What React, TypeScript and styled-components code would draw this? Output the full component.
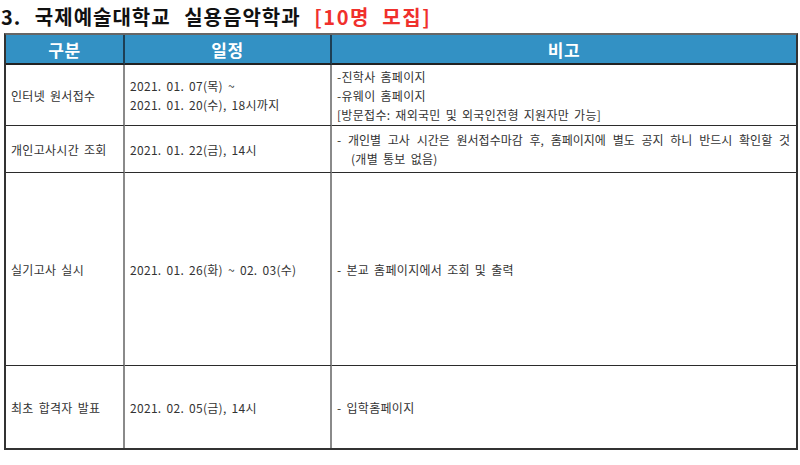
import React, { FC } from "react";
import styled, { createGlobalStyle } from "styled-components";

const GlobalStyle = createGlobalStyle`
  html, body {
    margin: 0;
    padding: 0;
    background: #ffffff;
  }
  body {
    font-family: "Noto Sans CJK KR", "Noto Sans", sans-serif;
  }
`;

const Page = styled.div`
  width: 800px;
  height: 465px;
  overflow: hidden;
  background: #fff;
`;

const Title = styled.h2`
  margin: 0;
  padding: 3px 0 0 1px;
  height: 33px;
  box-sizing: border-box;
  font-size: 20px;
  font-weight: 700;
  color: #111;
  letter-spacing: 1px;
  word-spacing: 8px;
  line-height: 27px;
  white-space: nowrap;
`;

const Accent = styled.span`
  color: #f0302c;
  letter-spacing: 1.6px;
  word-spacing: 6px;
`;

const Table = styled.div`
  margin-left: 4px;
  width: 794px;
  box-sizing: border-box;
  display: grid;
  grid-template-columns: 119px 207px 1fr;
  grid-template-rows: 30px 61px 47px 193px 82px;
  border: 2px solid #333;
  border-top-color: #666;
`;

const HeadCell = styled.div<{ $last?: boolean }>`
  background: #3391c4;
  color: #fff;
  font-size: 17px;
  font-weight: 700;
  display: flex;
  align-items: center;
  justify-content: center;
  border-right: ${p => (p.$last ? "none" : "2px solid #1d3f55")};
  border-bottom: 2px solid #222;
  letter-spacing: 0.5px;
`;

const Cell = styled.div<{ $last?: boolean; $bottom?: boolean; $pad?: number }>`
  display: flex;
  flex-direction: column;
  justify-content: ${p => (p.$pad !== undefined ? "flex-start" : "center")};
  padding: ${p => (p.$pad !== undefined ? `${p.$pad}px 4px 0 5px` : "0 4px 0 5px")};
  font-size: 12px;
  line-height: 19px;
  letter-spacing: 0.3px;
  color: #333;
  border-right: ${p => (p.$last ? "none" : "2px solid #8a8a8a")};
  border-bottom: ${p => (p.$bottom ? "none" : "1.5px solid #2b2b2b")};
  box-sizing: border-box;
  white-space: nowrap;
  word-spacing: 2px;
`;

const Justified = styled.div`
  white-space: normal;
  text-align: justify;
  text-align-last: justify;
  letter-spacing: 0;
  padding-right: 2px;
`;

const Indent = styled.div`
  padding-left: 14px;
`;

type Row = {
  label: string;
  date: React.ReactNode;
  note: React.ReactNode;
  pad?: number;
};

const rows: Row[] = [
  {
    label: "인터넷 원서접수",
    date: (
      <>
        <div>2021. 01. 07(목) ~</div>
        <div>2021. 01. 20(수), 18시까지</div>
      </>
    ),
    note: (
      <>
        <div>-진학사 홈페이지</div>
        <div>-유웨이 홈페이지</div>
        <div>[방문접수: 재외국민 및 외국인전형 지원자만 가능]</div>
      </>
    ),
    pad: 2,
  },
  {
    label: "개인고사시간 조회",
    date: "2021. 01. 22(금), 14시",
    note: (
      <>
        <Justified>- 개인별 고사 시간은 원서접수마감 후, 홈페이지에 별도 공지 하니 반드시 확인할 것</Justified>
        <Indent>(개별 통보 없음)</Indent>
      </>
    ),
    pad: 4,
  },
  {
    label: "실기고사 실시",
    date: "2021. 01. 26(화) ~ 02. 03(수)",
    note: "- 본교 홈페이지에서 조회 및 출력",
  },
  {
    label: "최초 합격자 발표",
    date: "2021. 02. 05(금), 14시",
    note: "- 입학홈페이지",
  },
];

const App: FC = () => {
  return (
    <Page>
      <GlobalStyle />
      <Title>
        3. 국제예술대학교 실용음악학과 <Accent>[10명 모집]</Accent>
      </Title>
      <Table>
        <HeadCell>구분</HeadCell>
        <HeadCell>일정</HeadCell>
        <HeadCell $last>비고</HeadCell>
        {rows.map((r, i) => {
          const bottom = i === rows.length - 1;
          return (
            <React.Fragment key={r.label}>
              <Cell $bottom={bottom}>{r.label}</Cell>
              <Cell $bottom={bottom}>{r.date}</Cell>
              <Cell $bottom={bottom} $last $pad={r.pad}>
                {r.note}
              </Cell>
            </React.Fragment>
          );
        })}
      </Table>
    </Page>
  );
};

export default App;
